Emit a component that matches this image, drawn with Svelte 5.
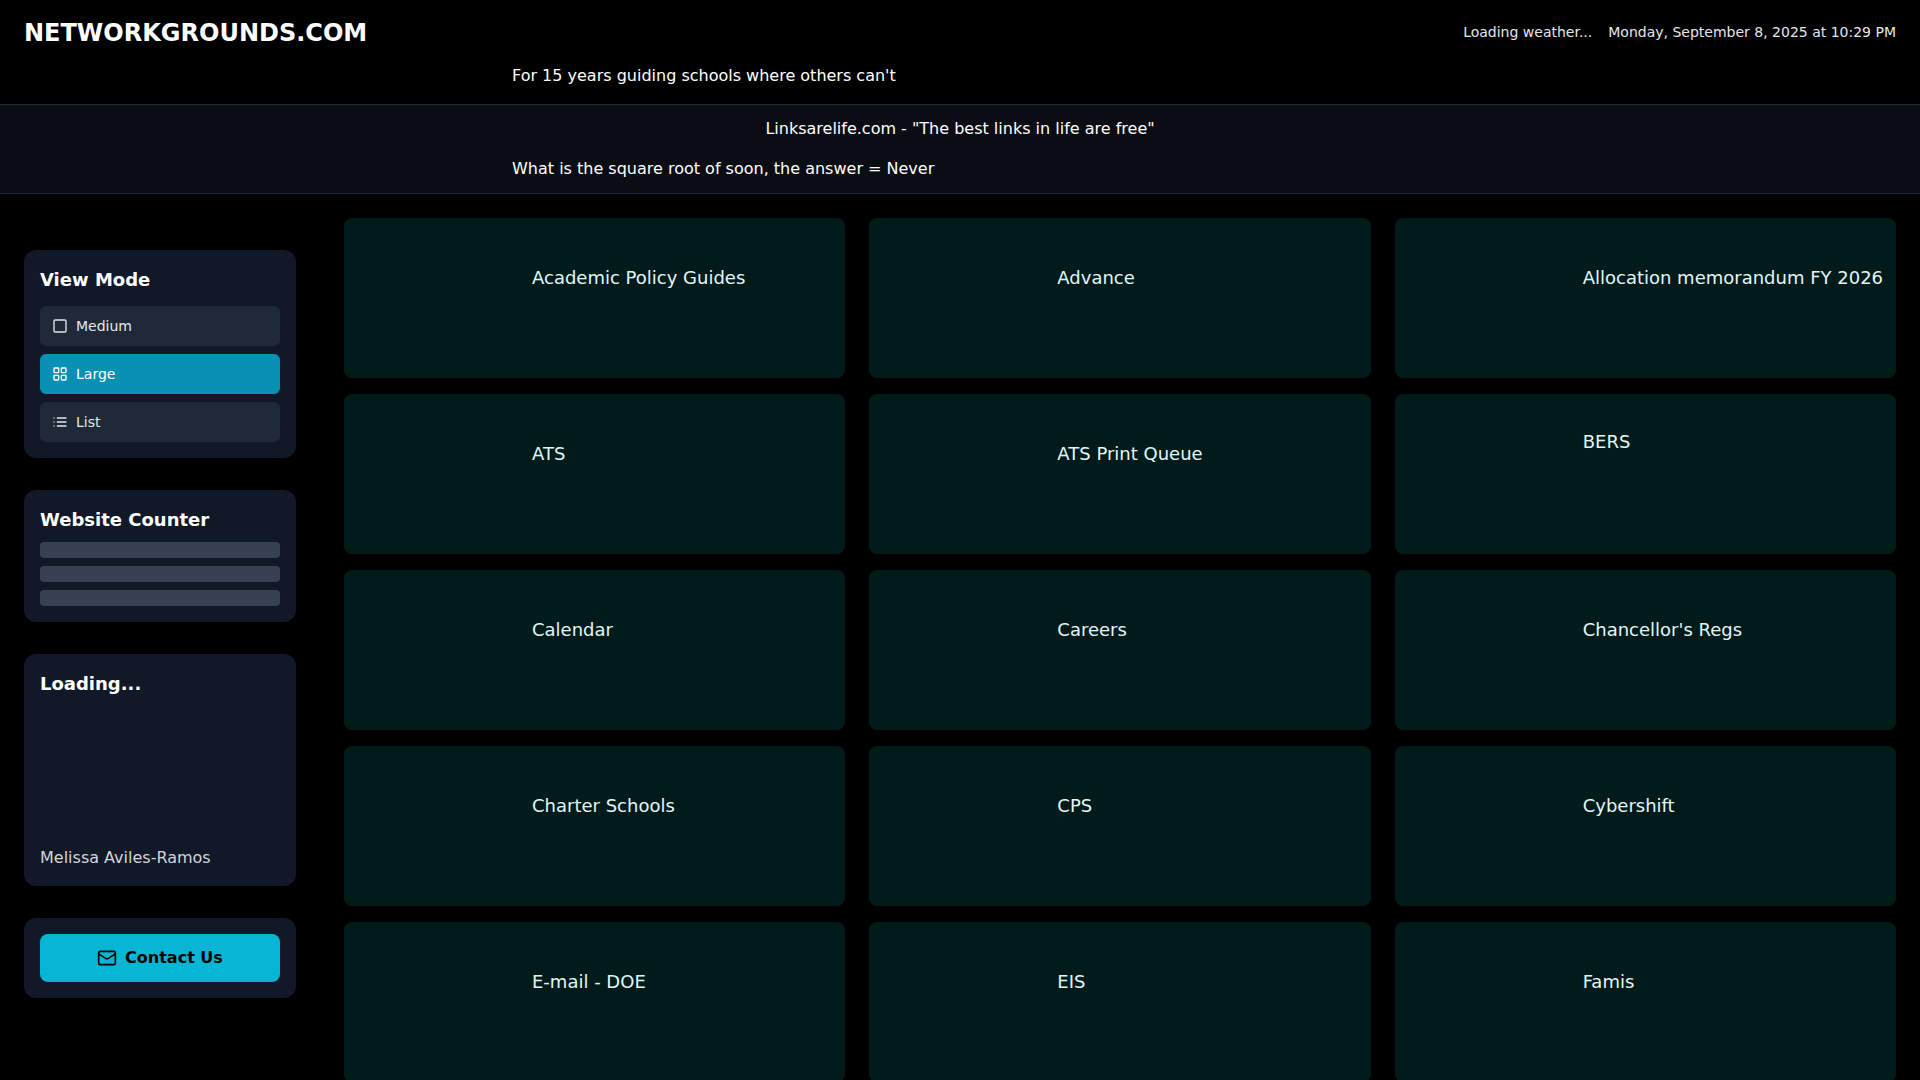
<script>
	const links = [
		'Academic Policy Guides',
		'Advance',
		'Allocation memorandum FY 2026',
		'ATS',
		'ATS Print Queue',
		'BERS',
		'Calendar',
		'Careers',
		"Chancellor's Regs",
		'Charter Schools',
		'CPS',
		'Cybershift',
		'E-mail - DOE',
		'EIS',
		'Famis'
	];
</script>

<div class="page">
	<header class="header">
		<div class="top-row">
			<h1>NETWORKGROUNDS.COM</h1>
			<div class="status">
				<span>Loading weather...</span>
				<span>Monday, September 8, 2025 at 10:29 PM</span>
			</div>
		</div>
		<p class="tagline">For 15 years guiding schools where others can't</p>
	</header>

	<section class="banner">
		<p class="banner-title">Linksarelife.com - "The best links in life are free"</p>
		<p class="banner-quote">What is the square root of soon, the answer = Never</p>
	</section>

	<div class="layout">
		<aside class="sidebar">
			<div class="panel">
				<h2>View Mode</h2>
				<div class="modes">
					<button class="mode">
						<svg viewBox="0 0 24 24"><rect x="3" y="3" width="18" height="18" rx="2" /></svg>
						Medium
					</button>
					<button class="mode active">
						<svg viewBox="0 0 24 24">
							<rect x="3" y="3" width="7" height="7" rx="1" />
							<rect x="14" y="3" width="7" height="7" rx="1" />
							<rect x="14" y="14" width="7" height="7" rx="1" />
							<rect x="3" y="14" width="7" height="7" rx="1" />
						</svg>
						Large
					</button>
					<button class="mode">
						<svg viewBox="0 0 24 24">
							<path d="M8 6h13M8 12h13M8 18h13M3 6h.01M3 12h.01M3 18h.01" />
						</svg>
						List
					</button>
				</div>
			</div>

			<div class="panel">
				<h2>Website Counter</h2>
				<div class="skeletons">
					<div class="skeleton"></div>
					<div class="skeleton"></div>
					<div class="skeleton"></div>
				</div>
			</div>

			<div class="panel quote">
				<h2>Loading...</h2>
				<p class="author">Melissa Aviles-Ramos</p>
			</div>

			<div class="panel">
				<button class="contact">
					<svg viewBox="0 0 24 24">
						<rect x="2" y="4" width="20" height="16" rx="2" />
						<path d="m22 7-8.97 5.7a1.94 1.94 0 0 1-2.06 0L2 7" />
					</svg>
					Contact Us
				</button>
			</div>
		</aside>

		<main class="grid">
			{#each links as link}
				<a class="card" class:raised={link === 'BERS'} href="#top">{link}</a>
			{/each}
		</main>
	</div>
</div>

<style>
	:global(body) {
		background: #000;
		overflow: hidden;
	}

	.page {
		height: 100vh;
		overflow: hidden;
		background: #000;
		color: #fff;
		font-family: 'DejaVu Sans', sans-serif;
	}

	p,
	h1,
	h2 {
		margin: 0;
	}

	.header {
		height: 104px;
		padding: 16px 24px 0;
		box-sizing: border-box;
	}

	.top-row {
		display: flex;
		justify-content: space-between;
		align-items: center;
		height: 32px;
	}

	h1 {
		padding-top: 1px;
		font-size: 24px;
		font-weight: 700;
		line-height: 32px;
	}

	.status {
		display: flex;
		gap: 16px;
		font-size: 14px;
		color: #e5e7eb;
	}

	.tagline {
		margin-top: 16px;
		padding-left: 488px;
		font-size: 16px;
		line-height: 24px;
	}

	.banner {
		height: 90px;
		box-sizing: border-box;
		padding-top: 12px;
		background: #0a0e14;
		border-top: 1px solid #1f2937;
		border-bottom: 1px solid #1f2937;
		font-size: 16px;
		line-height: 24px;
	}

	.banner-title {
		text-align: center;
	}

	.banner-quote {
		margin-top: 16px;
		padding-left: 512px;
	}

	.layout {
		display: flex;
		gap: 48px;
		padding: 24px 24px 0;
	}

	.sidebar {
		flex: 0 0 272px;
		display: flex;
		flex-direction: column;
		gap: 32px;
		padding-top: 32px;
	}

	.panel {
		padding: 16px;
		background: #111827;
		border-radius: 12px;
	}

	h2 {
		font-size: 18px;
		font-weight: 700;
		line-height: 28px;
	}

	.modes {
		display: flex;
		flex-direction: column;
		gap: 8px;
		margin-top: 12px;
	}

	.mode {
		display: flex;
		align-items: center;
		gap: 8px;
		height: 40px;
		padding: 0 12px;
		border: 0;
		border-radius: 6px;
		background: #1f2937;
		color: #e5e7eb;
		font: 14px 'DejaVu Sans', sans-serif;
	}

	.mode.active {
		background: #0891b2;
		color: #fff;
	}

	svg {
		flex: none;
		fill: none;
		stroke: currentColor;
		stroke-width: 2;
		stroke-linecap: round;
		stroke-linejoin: round;
	}

	.mode svg {
		width: 16px;
		height: 16px;
	}

	.skeletons {
		display: flex;
		flex-direction: column;
		gap: 8px;
		margin-top: 8px;
	}

	.skeleton {
		height: 16px;
		background: #374151;
		border-radius: 4px;
	}

	.quote {
		display: flex;
		flex-direction: column;
		justify-content: space-between;
		height: 232px;
		box-sizing: border-box;
	}

	.author {
		font-size: 16px;
		line-height: 24px;
		color: #d1d5db;
	}

	.contact {
		display: flex;
		align-items: center;
		justify-content: center;
		gap: 8px;
		width: 100%;
		height: 48px;
		padding: 0 0 1px;
		border: 0;
		border-radius: 8px;
		background: #06b6d4;
		color: #000;
		font: 700 16px/24px 'DejaVu Sans', sans-serif;
	}

	.contact svg {
		width: 20px;
		height: 20px;
	}

	.grid {
		flex: 1;
		display: grid;
		grid-template-columns: repeat(3, 1fr);
		grid-auto-rows: 160px;
		column-gap: 24px;
		row-gap: 16px;
	}

	.card {
		padding: 48px 12px 0 188px;
		background: #011b1a;
		border-radius: 8px;
		color: #e0f7fa;
		font-size: 18px;
		line-height: 24px;
		text-decoration: none;
	}

	.card.raised {
		padding-top: 36px;
	}
</style>
